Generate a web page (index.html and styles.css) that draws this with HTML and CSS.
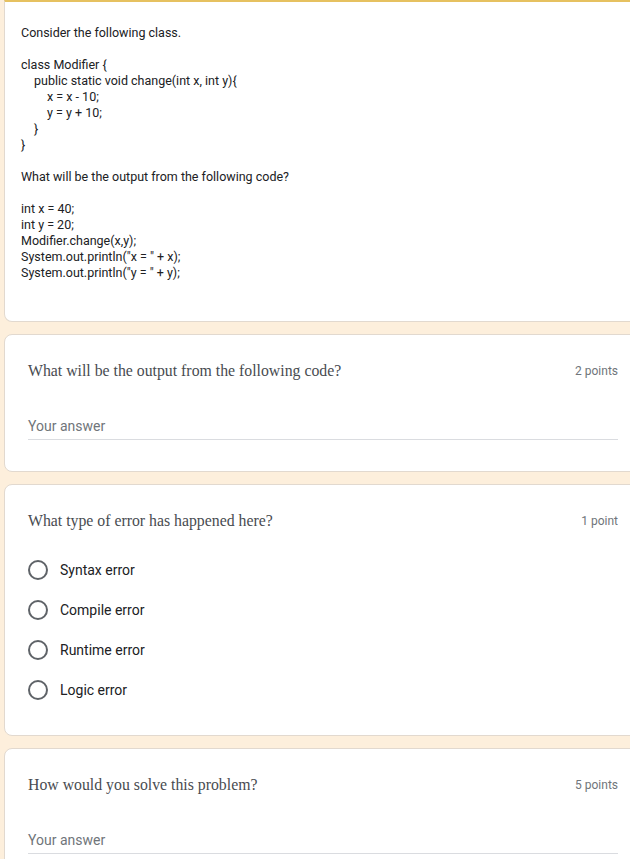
FILE: index.html
```html
<!DOCTYPE html>
<html lang="en">
<head>
<meta charset="utf-8">
<title>Form</title>
<link rel="stylesheet" href="styles.css">
</head>
<body>
<main class="column">
  <section class="card card-intro">
    <div class="code">
      <div class="line">Consider the following class.</div>
      <div class="line blank"></div>
      <div class="line">class Modifier {</div>
      <div class="line i1">public static void change(int x, int y){</div>
      <div class="line i2">x = x - 10;</div>
      <div class="line i2">y = y + 10;</div>
      <div class="line i1">}</div>
      <div class="line">}</div>
      <div class="line blank"></div>
      <div class="line">What will be the output from the following code?</div>
      <div class="line blank"></div>
      <div class="line">int x = 40;</div>
      <div class="line">int y = 20;</div>
      <div class="line">Modifier.change(x,y);</div>
      <div class="line">System.out.println("x = " + x);</div>
      <div class="line">System.out.println("y = " + y);</div>
    </div>
  </section>

  <section class="card question">
    <div class="q-head">
      <div class="q-title">What will be the output from the following code?</div>
      <div class="q-points">2 points</div>
    </div>
    <div class="answer">Your answer</div>
  </section>

  <section class="card question">
    <div class="q-head">
      <div class="q-title">What type of error has happened here?</div>
      <div class="q-points">1 point</div>
    </div>
    <div class="options">
      <div class="option"><span class="radio"></span><span class="opt-label">Syntax error</span></div>
      <div class="option"><span class="radio"></span><span class="opt-label">Compile error</span></div>
      <div class="option"><span class="radio"></span><span class="opt-label">Runtime error</span></div>
      <div class="option"><span class="radio"></span><span class="opt-label">Logic error</span></div>
    </div>
  </section>

  <section class="card question">
    <div class="q-head">
      <div class="q-title">How would you solve this problem?</div>
      <div class="q-points">5 points</div>
    </div>
    <div class="answer">Your answer</div>
  </section>
</main>
</body>
</html>
```

FILE: styles.css
```css
html, body {
  margin: 0;
  padding: 0;
}
body {
  background: #fdefdc;
  overflow: hidden;
  font-family: Roboto, "Liberation Sans", Arial, sans-serif;
  color: #202124;
}
.column {
  width: 660px;
  padding-left: 4px;
  display: flex;
  flex-direction: column;
  gap: 12px;
}
.card {
  background: #ffffff;
  border: 1px solid #e2d9cf;
  border-radius: 8px;
  box-sizing: border-box;
}
.card-intro {
  border-top: 2px solid #e6c160;
  border-radius: 0 0 8px 8px;
  padding: 23px 16px 40px 16px;
}
.code {
  font-size: 12.5px;
  line-height: 16px;
  color: #202124;
}
.line.blank {
  height: 16px;
}
.i1 { padding-left: 13px; }
.i2 { padding-left: 26px; }

.question {
  padding: 24px 0 0 23px;
  width: 638px;
}
.q-head {
  display: flex;
  align-items: center;
  justify-content: space-between;
  width: 590px;
  height: 24px;
}
.q-title {
  font-family: "Liberation Serif", "Times New Roman", serif;
  font-size: 15.8px;
  color: #484b50;
}
.q-points {
  font-size: 12px;
  color: #70757a;
}
.answer {
  width: 590px;
  margin-top: 33px;
  font-size: 14px;
  color: #70757a;
  line-height: 20px;
  padding-bottom: 3px;
  border-bottom: 1px solid #dadce0;
  margin-bottom: 31px;
}
.options {
  display: flex;
  flex-direction: column;
  padding-top: 17px;
  padding-bottom: 25px;
}
.option {
  display: flex;
  align-items: center;
  height: 40px;
}
.radio {
  width: 16px;
  height: 16px;
  border: 2px solid #5f6368;
  border-radius: 50%;
  margin-right: 12px;
  flex: none;
}
.opt-label {
  font-size: 14px;
  color: #202124;
}
```
